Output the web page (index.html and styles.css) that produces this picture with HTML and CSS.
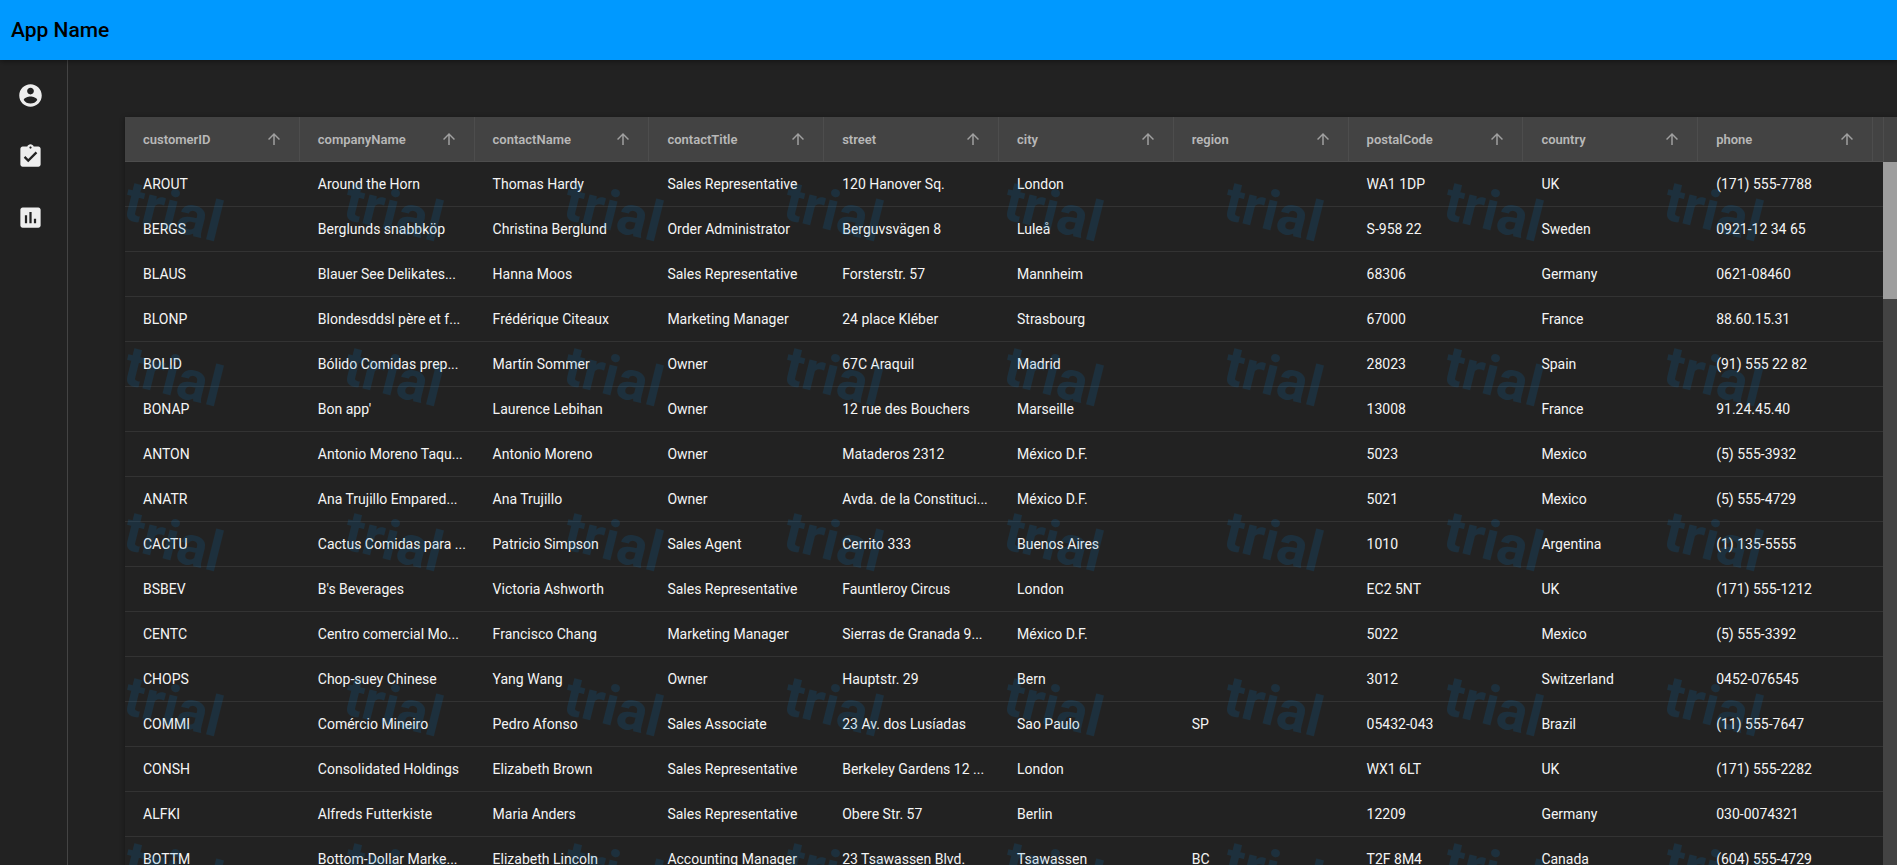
FILE: index.html
```html
<!DOCTYPE html>
<html lang="en">

<head>
    <meta charset="UTF-8">
    <meta name="viewport" content="width=device-width, initial-scale=1.0">
    <title>App Name</title>
    <link rel="stylesheet" href="styles.css">
</head>

<body>
    <header class="navbar">
        <h1>App Name</h1>
    </header>
    <div class="container">
        <nav class="sidebar">
            <a href="#account" aria-label="Account">
                <svg viewBox="0 0 24 24"><path d="M12 2C6.48 2 2 6.48 2 12s4.48 10 10 10 10-4.48 10-10S17.52 2 12 2zm0 3c1.66 0 3 1.34 3 3s-1.34 3-3 3-3-1.34-3-3 1.34-3 3-3zm0 14.2c-2.5 0-4.71-1.28-6-3.22.03-1.99 4-3.08 6-3.08 1.99 0 5.97 1.09 6 3.08-1.29 1.94-3.5 3.22-6 3.22z"/></svg>
            </a>
            <a href="#tasks" aria-label="Tasks">
                <svg viewBox="0 0 24 24"><path d="M19 3h-4.18C14.4 1.84 13.3 1 12 1c-1.3 0-2.4.84-2.82 2H5c-1.1 0-2 .9-2 2v14c0 1.1.9 2 2 2h14c1.1 0 2-.9 2-2V5c0-1.1-.9-2-2-2zm-7 0c.55 0 1 .45 1 1s-.45 1-1 1-1-.45-1-1 .45-1 1-1zm-2 14l-4-4 1.41-1.41L10 14.17l6.59-6.59L18 9l-8 8z"/></svg>
            </a>
            <a href="#reports" aria-label="Reports">
                <svg viewBox="0 0 24 24"><path d="M19 3H5c-1.1 0-2 .9-2 2v14c0 1.1.9 2 2 2h14c1.1 0 2-.9 2-2V5c0-1.1-.9-2-2-2zM9 17H7v-7h2v7zm4 0h-2V7h2v10zm4 0h-2v-4h2v4z"/></svg>
            </a>
        </nav>
        <main class="content">
            <div class="grid">
                <div class="grid-body">
                    <table>
                        <thead>
                            <tr id="head"></tr>
                        </thead>
                        <tbody id="rows"></tbody>
                    </table>
                    <svg class="watermark" aria-hidden="true">
                        <defs>
                            <pattern id="trial" width="220" height="165" patternUnits="userSpaceOnUse">
                                <text transform="translate(-4 56) rotate(14)">trial</text>
                            </pattern>
                        </defs>
                        <rect width="100%" height="100%" fill="url(#trial)"/>
                    </svg>
                </div>
                <div class="scrollbar">
                    <div class="scrollbar-head"></div>
                    <div class="scrollbar-thumb"></div>
                </div>
            </div>
        </main>
    </div>
    <script>
        const columns = ['customerID', 'companyName', 'contactName', 'contactTitle', 'street', 'city', 'region', 'postalCode', 'country', 'phone']
        const customers = [
            ['AROUT', 'Around the Horn', 'Thomas Hardy', 'Sales Representative', '120 Hanover Sq.', 'London', '', 'WA1 1DP', 'UK', '(171) 555-7788'],
            ['BERGS', 'Berglunds snabbköp', 'Christina Berglund', 'Order Administrator', 'Berguvsvägen 8', 'Luleå', '', 'S-958 22', 'Sweden', '0921-12 34 65'],
            ['BLAUS', 'Blauer See Delikates...', 'Hanna Moos', 'Sales Representative', 'Forsterstr. 57', 'Mannheim', '', '68306', 'Germany', '0621-08460'],
            ['BLONP', 'Blondesddsl père et f...', 'Frédérique Citeaux', 'Marketing Manager', '24 place Kléber', 'Strasbourg', '', '67000', 'France', '88.60.15.31'],
            ['BOLID', 'Bólido Comidas prep...', 'Martín Sommer', 'Owner', '67C Araquil', 'Madrid', '', '28023', 'Spain', '(91) 555 22 82'],
            ['BONAP', "Bon app'", 'Laurence Lebihan', 'Owner', '12 rue des Bouchers', 'Marseille', '', '13008', 'France', '91.24.45.40'],
            ['ANTON', 'Antonio Moreno Taqu...', 'Antonio Moreno', 'Owner', 'Mataderos 2312', 'México D.F.', '', '5023', 'Mexico', '(5) 555-3932'],
            ['ANATR', 'Ana Trujillo Empared...', 'Ana Trujillo', 'Owner', 'Avda. de la Constituci...', 'México D.F.', '', '5021', 'Mexico', '(5) 555-4729'],
            ['CACTU', 'Cactus Comidas para ...', 'Patricio Simpson', 'Sales Agent', 'Cerrito 333', 'Buenos Aires', '', '1010', 'Argentina', '(1) 135-5555'],
            ['BSBEV', "B's Beverages", 'Victoria Ashworth', 'Sales Representative', 'Fauntleroy Circus', 'London', '', 'EC2 5NT', 'UK', '(171) 555-1212'],
            ['CENTC', 'Centro comercial Mo...', 'Francisco Chang', 'Marketing Manager', 'Sierras de Granada 9...', 'México D.F.', '', '5022', 'Mexico', '(5) 555-3392'],
            ['CHOPS', 'Chop-suey Chinese', 'Yang Wang', 'Owner', 'Hauptstr. 29', 'Bern', '', '3012', 'Switzerland', '0452-076545'],
            ['COMMI', 'Comércio Mineiro', 'Pedro Afonso', 'Sales Associate', '23 Av. dos Lusíadas', 'Sao Paulo', 'SP', '05432-043', 'Brazil', '(11) 555-7647'],
            ['CONSH', 'Consolidated Holdings', 'Elizabeth Brown', 'Sales Representative', 'Berkeley Gardens 12 ...', 'London', '', 'WX1 6LT', 'UK', '(171) 555-2282'],
            ['ALFKI', 'Alfreds Futterkiste', 'Maria Anders', 'Sales Representative', 'Obere Str. 57', 'Berlin', '', '12209', 'Germany', '030-0074321'],
            ['BOTTM', 'Bottom-Dollar Marke...', 'Elizabeth Lincoln', 'Accounting Manager', '23 Tsawassen Blvd.', 'Tsawassen', 'BC', 'T2F 8M4', 'Canada', '(604) 555-4729']
        ]
        const arrow = '<svg viewBox="0 0 24 24"><path d="M4 12l1.41 1.41L11 7.83V20h2V7.83l5.58 5.59L20 12l-8-8-8 8z"/></svg>'

        document.getElementById('head').innerHTML = columns.map(name => {
            return `<th><div class="title"><span>${name}</span><button type="button" aria-label="Sort by ${name}">${arrow}</button></div></th>`
        }).join('') + '<td class="filler"></td>'

        document.getElementById('rows').innerHTML = customers.map(row => {
            return `<tr>${row.map(text => `<td>${text}</td>`).join('')}<td class="filler"></td></tr>`
        }).join('')
    </script>
</body>

</html>
```
FILE: styles.css
```css
* {
    box-sizing: border-box;
    margin: 0;
    padding: 0;
}

body {
    display: flex;
    flex-flow: column;
    height: 100vh;
    overflow: hidden;
    background-color: #222222;
    color: #f5f5f5;
    font-family: Roboto, "Liberation Sans", sans-serif;
    font-size: 14px;
}

.navbar {
    position: relative;
    display: flex;
    flex: none;
    align-items: center;
    height: 60px;
    padding: 0 11px;
    background-color: #0099ff;
    box-shadow: 0 1px 6px rgba(0, 0, 0, 0.5);
    color: #000000;
}

.navbar h1 {
    font-size: 21px;
    font-weight: 500;
}

.container {
    display: flex;
    flex: 1;
    min-height: 0;
}

.sidebar {
    display: flex;
    flex: none;
    flex-flow: column;
    gap: 34px;
    width: 68px;
    padding: 22px 17px;
    border-right: 1px solid #444444;
}

.sidebar a {
    width: 27px;
    height: 27px;
}

.sidebar svg {
    display: block;
    fill: #eeeeee;
}

.content {
    flex: 1;
    min-width: 0;
    padding: 57px 0 0 57px;
    overflow: hidden;
}

.grid {
    display: flex;
    box-shadow: 0 1px 5px rgba(0, 0, 0, 0.4);
}

.grid-body {
    position: relative;
    flex: 1;
    min-width: 0;
}

table {
    width: 100%;
    table-layout: fixed;
    border-spacing: 0;
}

th {
    height: 45px;
    padding: 0 16px 0 18px;
    background-color: #434343;
    border-right: 1px solid #4d4d4d;
    border-bottom: 1px solid #4d4d4d;
    color: #b8b8b8;
    font-size: 13px;
    font-weight: 600;
    text-align: left;
}

.title {
    display: flex;
    align-items: center;
    justify-content: space-between;
}

.title button {
    width: 18px;
    height: 18px;
    background: none;
    border: none;
    cursor: pointer;
}

.title svg {
    display: block;
    fill: #a0a0a0;
}

td {
    height: 45px;
    padding: 0 17px 0 18px;
    border-bottom: 1px solid #333333;
    overflow: hidden;
    white-space: nowrap;
}

.filler {
    width: 10px;
    padding: 0;
}

thead .filler {
    background-color: #434343;
    border-bottom-color: #4d4d4d;
}

/* repeated over the rows, starts right below the table head */
.watermark {
    position: absolute;
    top: 45px;
    left: 0;
    width: 100%;
    height: calc(100% - 45px);
    pointer-events: none;
}

.watermark text {
    fill: rgba(0, 127, 213, 0.15);
    font-size: 56px;
    font-weight: 700;
}

.scrollbar {
    flex: none;
    width: 14px;
    background-color: #434343;
}

.scrollbar-head {
    height: 45px;
    border-left: 1px solid #4d4d4d;
}

.scrollbar-thumb {
    height: 137px;
    background-color: #9e9e9e;
}
```
